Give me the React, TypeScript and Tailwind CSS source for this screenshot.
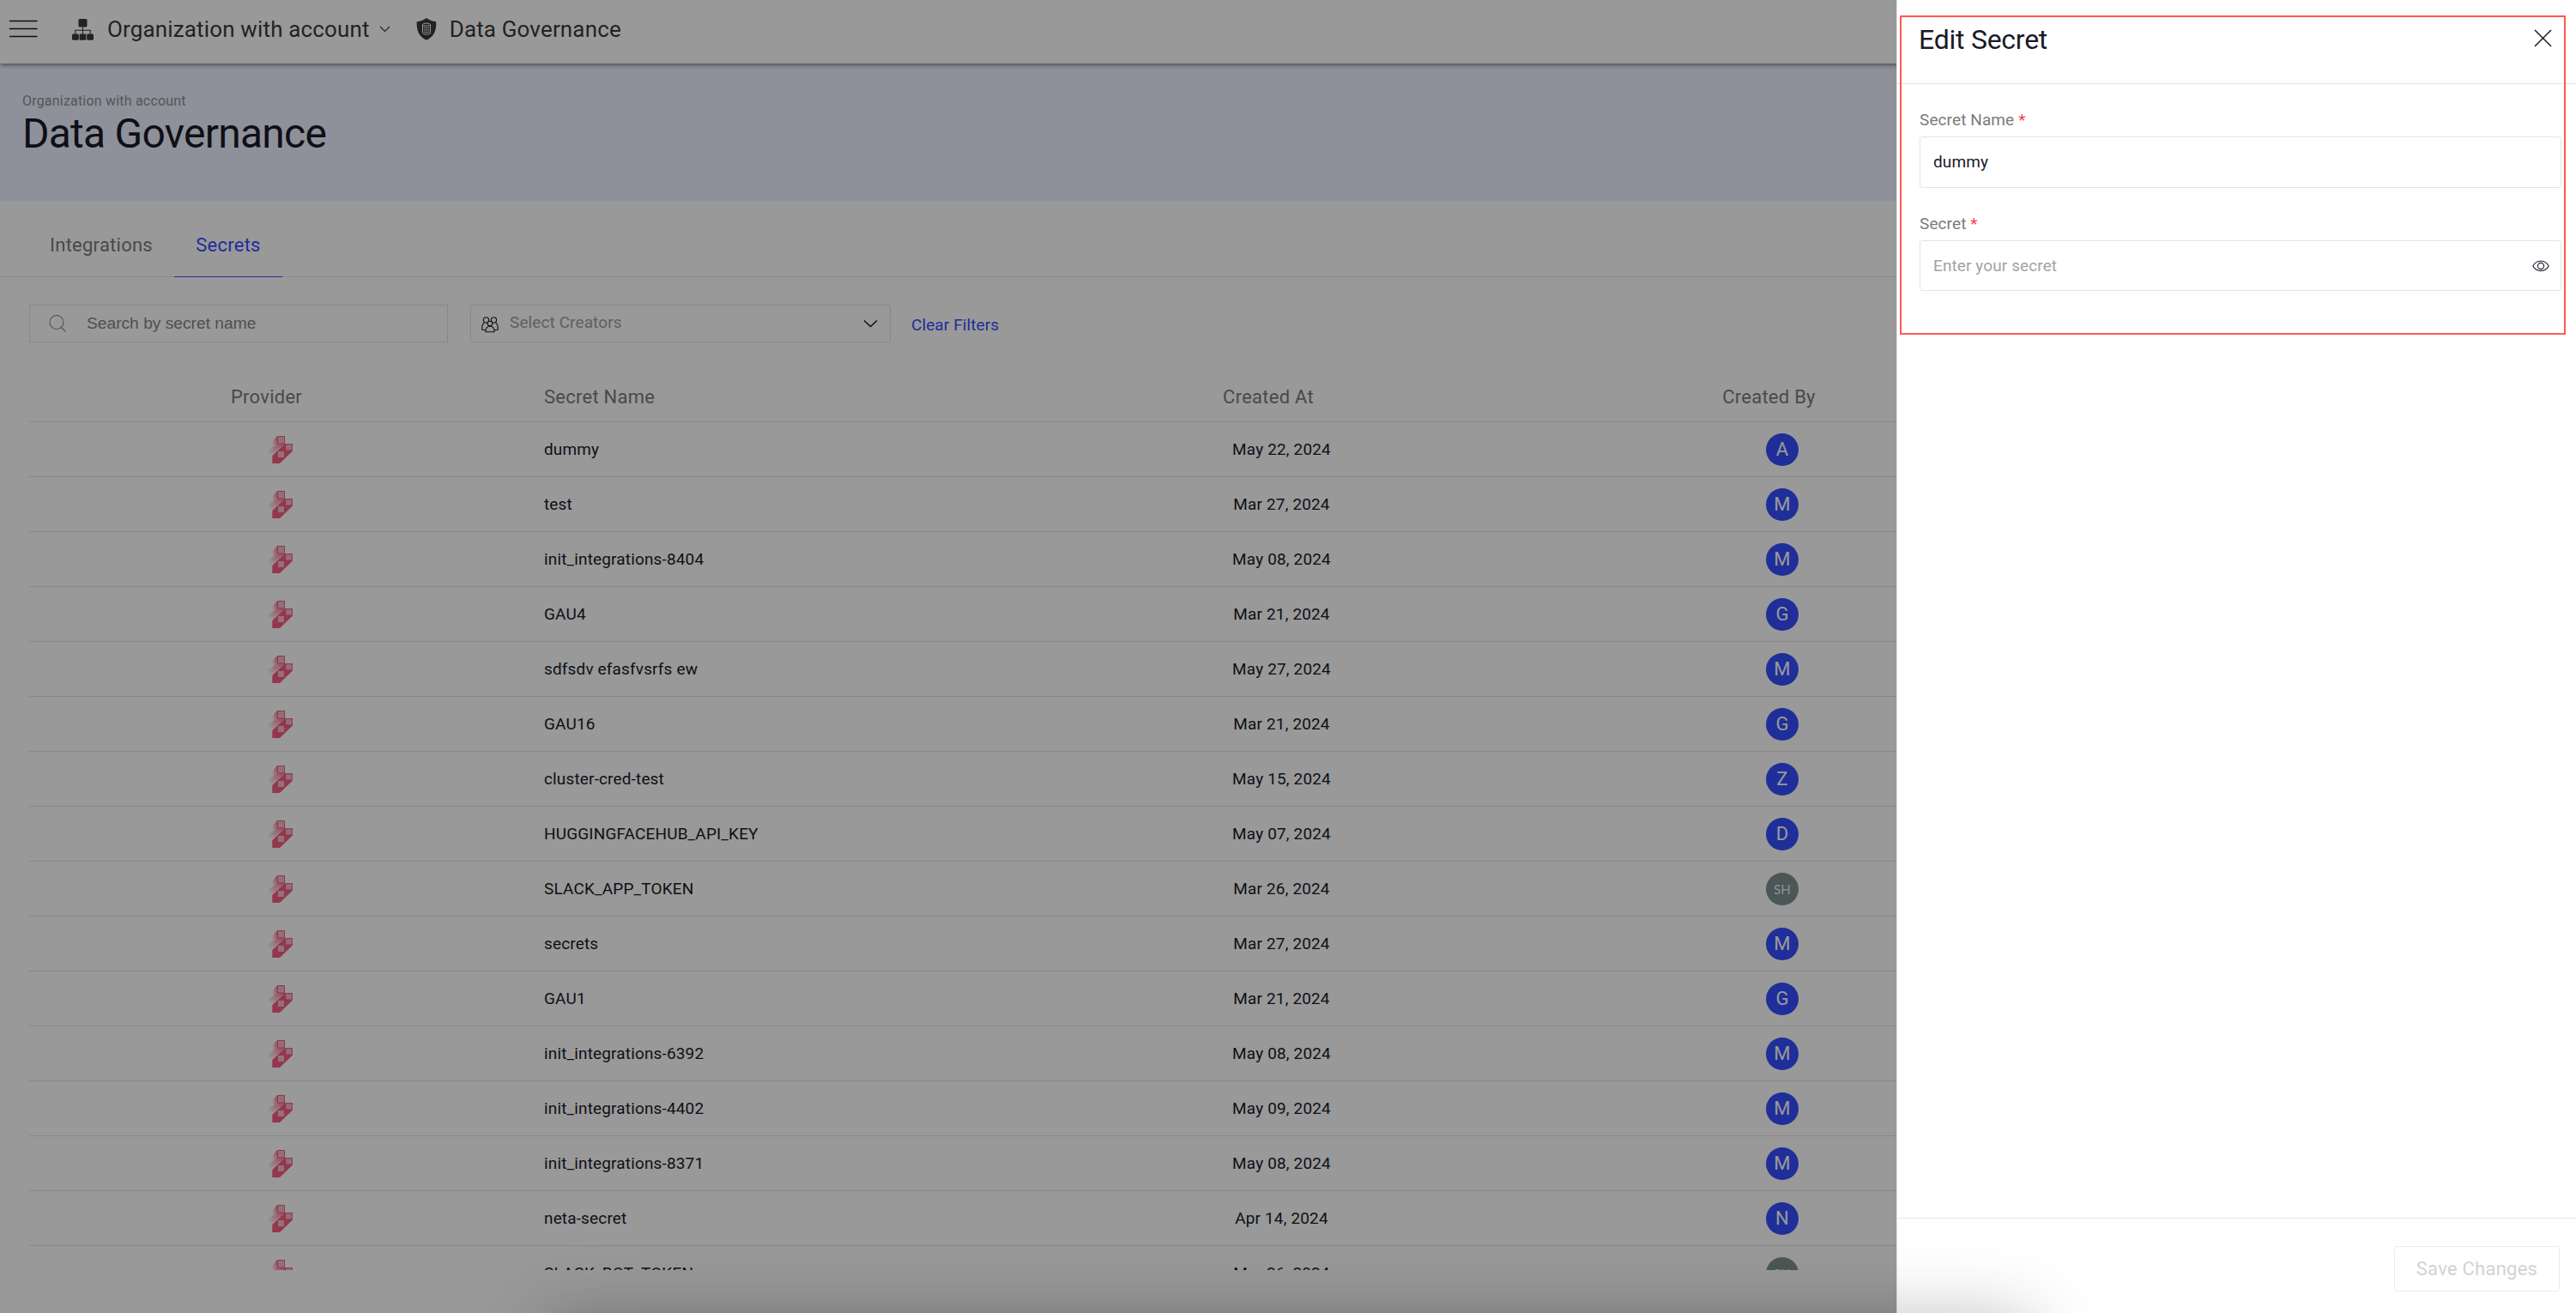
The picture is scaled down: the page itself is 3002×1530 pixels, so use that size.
interface SecretRow {
  name: string;
  createdAt: string;
  createdBy: string;
}

const secrets: SecretRow[] = [
  { name: "dummy", createdAt: "May 22, 2024", createdBy: "A" },
  { name: "test", createdAt: "Mar 27, 2024", createdBy: "M" },
  { name: "init_integrations-8404", createdAt: "May 08, 2024", createdBy: "M" },
  { name: "GAU4", createdAt: "Mar 21, 2024", createdBy: "G" },
  { name: "sdfsdv efasfvsrfs ew", createdAt: "May 27, 2024", createdBy: "M" },
  { name: "GAU16", createdAt: "Mar 21, 2024", createdBy: "G" },
  { name: "cluster-cred-test", createdAt: "May 15, 2024", createdBy: "Z" },
  { name: "HUGGINGFACEHUB_API_KEY", createdAt: "May 07, 2024", createdBy: "D" },
  { name: "SLACK_APP_TOKEN", createdAt: "Mar 26, 2024", createdBy: "SH" },
  { name: "secrets", createdAt: "Mar 27, 2024", createdBy: "M" },
  { name: "GAU1", createdAt: "Mar 21, 2024", createdBy: "G" },
  { name: "init_integrations-6392", createdAt: "May 08, 2024", createdBy: "M" },
  { name: "init_integrations-4402", createdAt: "May 09, 2024", createdBy: "M" },
  { name: "init_integrations-8371", createdAt: "May 08, 2024", createdBy: "M" },
  { name: "neta-secret", createdAt: "Apr 14, 2024", createdBy: "N" },
  { name: "SLACK_BOT_TOKEN", createdAt: "Mar 26, 2024", createdBy: "SH" },
];

function MenuIcon() {
  return (
    <svg width="34" height="22" viewBox="0 0 34 22" fill="none" stroke="#1a1a27" strokeWidth="1.6" strokeLinecap="round">
      <path d="M1.500 1.500h31.500M1.500 10.500h31.500M1.500 19.500h31.500" />
    </svg>
  );
}

function OrgIcon() {
  return (
    <svg width="25" height="25" viewBox="0 0 25 25" fill="#3a3a3a">
      <rect x="7.5" y="0" width="10" height="9.5" rx="1.6" />
      <rect x="0" y="17.5" width="7.8" height="7.3" rx="1.4" />
      <rect x="8.6" y="17.5" width="7.8" height="7.3" rx="1.4" />
      <rect x="17.2" y="17.5" width="7.8" height="7.3" rx="1.4" />
      <path d="M12.5 9.5v8M3.8 17.5v-4.3h17.4v4.3" fill="none" stroke="#3a3a3a" strokeWidth="1.1" />
    </svg>
  );
}

function ShieldIcon() {
  return (
    <svg width="24" height="26" viewBox="0 0 24 26">
      <path d="M12 0c2.8 2.3 6.6 3.7 11.3 4.2.5 10.8-3 17.7-11.3 21.6C3.7 21.9.2 15 .7 4.2 5.4 3.7 9.2 2.3 12 0z" fill="#3a3a3a" />
      <g fill="none" stroke="#fff" strokeWidth="1">
        <ellipse cx="12" cy="7.6" rx="4.5" ry="1.5" />
        <path d="M7.500 7.600v9.800c0 .9 2 1.600 4.500 1.600s4.500-.7 4.500-1.600V7.600" />
        <path d="M8.800 11c2 .7 4.400.7 6.400 0M8.800 13.500c2 .7 4.400.7 6.400 0M8.800 16c2 .7 4.400.7 6.400 0" />
      </g>
    </svg>
  );
}

function UsersIcon() {
  return (
    <svg width="20" height="19" viewBox="0 0 20 19" fill="none" stroke="#1a1a27" strokeWidth="1.1">
      <circle cx="5.5" cy="3.9" r="3.1" />
      <circle cx="14.5" cy="3.9" r="3.1" />
      <circle cx="10" cy="8" r="2.8" fill="#fff" />
      <path d="M5 17.700c-.4-4.200 1.600-6.500 5-6.500s5.400 2.300 5 6.500z" />
      <path d="M3.500 6.600C1.300 8.500.5 11 .7 15l4 .8M16.500 6.600c2.200 1.900 3 4.400 2.800 8.400l-4 .8" />
    </svg>
  );
}

function ProviderIcon() {
  return (
    <svg className="mr-[4px]" width="29" height="32" viewBox="0 0 29 32">
      <defs>
        <linearGradient id="trailTop" gradientUnits="userSpaceOnUse" x1="4" y1="8" x2="11" y2="5">
          <stop offset="0" stopColor="#ff5f86" stopOpacity="0" />
          <stop offset="1" stopColor="#ff5f86" stopOpacity="0.75" />
        </linearGradient>
        <linearGradient id="trailSide" gradientUnits="userSpaceOnUse" x1="1" y1="21" x2="17" y2="9">
          <stop offset="0" stopColor="#ff5f86" stopOpacity="0" />
          <stop offset="1" stopColor="#ff5f86" stopOpacity="0.8" />
        </linearGradient>
      </defs>
      <path d="M11 0v9.500L4 14l2-8z" fill="url(#trailTop)" />
      <path d="M11 9h9L5.500 21H0V17z" fill="url(#trailSide)" />
      <path d="M20 9h9v8.500L14 32H5.300v-9z" fill="#f65c80" />
      <path d="M11.500.5h8v8.500h-8z" fill="#f3b9c8" stroke="#ee5a80" />
      <path d="M21 9.800h7.300v7H21z" fill="#f3b9c8" stroke="#ee5a80" strokeWidth=".6" />
      <path d="M12 18h7v7h-7z" fill="#f7bccb" />
    </svg>
  );
}

function Avatar({ label }: { label: string }) {
  if (label.length > 1) {
    return (
      <div className="w-[38px] h-[38px] rounded-full bg-[#7d918f] flex items-center justify-center font-['Lato',sans-serif] text-[15px] text-white/85">
        {label}
      </div>
    );
  }
  return (
    <div className="w-[38px] h-[38px] rounded-full bg-[#344eff] flex items-center justify-center text-[22px] leading-none text-white">
      {label}
    </div>
  );
}

function TopBar() {
  return (
    <header className="relative z-10 h-[74px] pb-[6px] pl-[10px] flex items-center bg-white text-[26px] tracking-[0.15px] text-[#3a3a3a] shadow-[0_1px_6px_rgba(0,0,0,0.6)]">
      <MenuIcon />
      <div className="ml-[40px] flex items-center">
        <OrgIcon />
        <span className="ml-[16px]">Organization with account</span>
        <svg className="ml-[11px]" width="13" height="8" viewBox="0 0 13 8" fill="none" stroke="#3a3a3a" strokeWidth="1.1">
          <path d="M1 1l5.500 5.500L12 1" />
        </svg>
      </div>
      <div className="ml-[30px] flex items-center">
        <ShieldIcon />
        <span className="ml-[15px]">Data Governance</span>
      </div>
    </header>
  );
}

function Filters() {
  return (
    <div className="mt-8 pl-[34px] flex h-11 text-[19px] tracking-[0.1px]">
      <div className="w-[488px] border border-[#e3e3e3] flex items-center pl-[22px]">
        <svg width="21" height="21" viewBox="0 0 21 21" fill="none" stroke="#8c8c8c" strokeWidth="1.1">
          <circle cx="9" cy="8.500" r="8" />
          <path d="M14.500 14.500l5 5" />
        </svg>
        <span className="ml-[23px] font-['Liberation_Sans',Arial,sans-serif] text-[19.2px] tracking-normal text-[#858585]">Search by secret name</span>
      </div>
      <div className="ml-[26px] w-[490px] border border-[#e3e3e3] rounded-[3px] flex items-center pl-[12px] pr-[14px]">
        <div className="pt-[3px]">
          <UsersIcon />
        </div>
        <span className="ml-[13px] pb-[2px] text-[#a0a0a0]">Select Creators</span>
        <svg className="ml-auto" width="17" height="10" viewBox="0 0 17 10" fill="none" stroke="#1a1a27" strokeWidth="1.5">
          <path d="M1 1.500l7.500 7L16 1.500" />
        </svg>
      </div>
      <button className="ml-[24px] pt-[4px] text-[#344eff]">Clear Filters</button>
    </div>
  );
}

function SecretsTable() {
  return (
    <div className="ml-[34px] mt-9 h-[1045px] overflow-hidden text-[19px] tracking-[0.15px] text-[#1a1a27]">
      <div className="grid grid-cols-[588px_578px_587px_580px] items-center h-[57px] pb-[2px] border-b border-[#e3e3e3] text-[22px] tracking-[0.25px] text-[#7b7b7b]">
        <div className="text-center pr-[35px]">Provider</div>
        <div className="pl-[12px]">Secret Name</div>
        <div className="text-center pr-[31px]">Created At</div>
        <div className="text-center pr-[31px]">Created By</div>
      </div>
      {secrets.map((secret) => (
        <div key={secret.name} className="grid grid-cols-[588px_578px_587px_580px] items-center h-16 pt-px border-b border-[#e3e3e3]">
          <div className="flex justify-center">
            <ProviderIcon />
          </div>
          <div className="pl-[12px]">{secret.name}</div>
          <div className="text-center">{secret.createdAt}</div>
          <div className="flex justify-center">
            <Avatar label={secret.createdBy} />
          </div>
        </div>
      ))}
    </div>
  );
}

function FieldLabel({ children }: { children: string }) {
  return (
    <label className="block text-[19px] leading-[24px] tracking-[0.1px] text-[#7b7b7b]">
      {children} <span className="text-[#ff3b3b]">*</span>
    </label>
  );
}

function EditSecretDrawer() {
  return (
    <aside className="absolute top-0 right-0 w-[792px] h-[1530px] flex flex-col bg-white border-l border-[#dedede] text-[#1b1a28]">
      <div className="h-[98px] flex items-start justify-between pl-[25px] pr-[28px] border-b border-[#e3e4e6]">
        <h2 className="mt-[26px] text-[32px] leading-[40px] tracking-[-0.25px]">Edit Secret</h2>
        <svg className="mt-[34px]" width="21" height="21" viewBox="0 0 21 21" fill="none" stroke="#1b1a28" strokeWidth="1.5">
          <path d="M1 1l19 19M20 1L1 20" />
        </svg>
      </div>

      <div className="flex-1 pl-[26px] pr-[17px] pt-[30px] text-[19px] tracking-[0.1px]">
        <FieldLabel>Secret Name</FieldLabel>
        <div className="mt-[7px] mb-[30px] h-[60px] border border-[#e3e4e6] rounded-[3px] flex items-center pl-[15px]">dummy</div>
        <FieldLabel>Secret</FieldLabel>
        <div className="mt-[7px] h-[59px] border border-[#e3e4e6] rounded-[3px] flex items-center justify-between pl-[15px] pr-[13px]">
          <span className="pt-px text-[#a3a3a3]">Enter your secret</span>
          <svg width="20" height="14" viewBox="0 0 20 14" fill="none" stroke="#1b1a28" strokeWidth="1.1">
            <path d="M.8 7C3 3.200 6.200 1.300 10 1.300S17 3.200 19.200 7C17 10.800 13.800 12.700 10 12.700S3 10.800.8 7z" />
            <circle cx="10" cy="7" r="3.6" />
          </svg>
        </div>
      </div>

      <div className="h-[111px] border-t border-[#e3e4e6] flex justify-end pt-[32px] pr-[19px]">
        <button className="w-[193px] h-[53px] border border-[#ececec] rounded-[3px] text-[22px] tracking-[0.25px] text-[#d2d2d2]">
          Save Changes
        </button>
      </div>

      {/* Highlight frame round the form */}
      <div className="absolute left-[3px] top-[18px] w-[776px] h-[372px] border-2 border-[#ff5a4f]" />
    </aside>
  );
}

export default function App() {
  return (
    <div className="relative w-[3002px] h-[1530px] overflow-hidden bg-white font-['Roboto',sans-serif]">
      <TopBar />
      <div className="h-[160px] pt-[34px] pl-[26px] bg-[#edf2ff]">
        <div className="text-[16px] leading-[20px] tracking-[0.2px] text-[#8f8f95]">Organization with account</div>
        <h1 className="text-[48px] leading-[56px] tracking-[-0.75px] text-[#1a1a27]">Data Governance</h1>
      </div>
      <nav className="h-[89px] pl-[34px] flex gap-[1px] border-b border-[#e3e3e3] text-[22px] tracking-[0.25px] text-[#7b7b7b]">
        <div className="h-[89px] px-6 pt-[14px] flex items-center">Integrations</div>
        <div className="w-[126px] h-[89px] pt-[14px] flex items-center justify-center border-b border-[#344eff] text-[#344eff]">Secrets</div>
      </nav>
      <Filters />
      <SecretsTable />
      <div className="absolute inset-0 z-20 bg-black/40" />
      <div className="absolute inset-0 z-30">
        <EditSecretDrawer />
        <div className="absolute top-[1542px] left-[636px] w-[1730px] h-[200px] shadow-[0_0_88px_rgba(0,0,0,0.3)]" />
      </div>
    </div>
  );
}
